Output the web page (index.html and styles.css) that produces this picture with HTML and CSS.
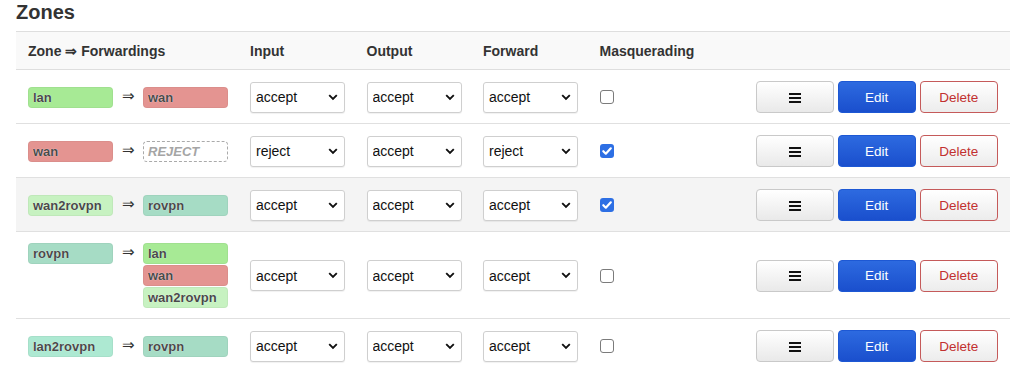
FILE: index.html
```html
<!DOCTYPE html>
<html lang="en">
<head>
    <meta charset="UTF-8">
    <title>Zones</title>
    <link rel="stylesheet" href="styles.css">
</head>
<body>

    <div class="zones">
        <h2>Zones</h2>

        <table class="zone-table">
            <colgroup>
                <col class="col-zone">
                <col class="col-pol">
                <col class="col-pol">
                <col class="col-pol">
                <col class="col-masq">
                <col>
            </colgroup>
            <thead>
                <tr>
                    <th>Zone &rArr; Forwardings</th>
                    <th>Input</th>
                    <th>Output</th>
                    <th>Forward</th>
                    <th>Masquerading</th>
                    <th></th>
                </tr>
            </thead>
            <tbody>
                <!-- lan -->
                <tr>
                    <td>
                        <div class="fwd">
                            <span class="zone z-lan">lan</span>
                            <span class="arrow">&rArr;</span>
                            <div class="dests">
                                <span class="zone z-wan">wan</span>
                            </div>
                        </div>
                    </td>
                    <td><select><option>accept</option></select></td>
                    <td><select><option>accept</option></select></td>
                    <td><select><option>accept</option></select></td>
                    <td><span class="check"></span></td>
                    <td>
                        <div class="actions">
                            <button class="btn"><svg width="12" height="10" viewBox="0 0 12 10"><path d="M0 1h12M0 5h12M0 9h12" stroke="#111" stroke-width="1.8"/></svg></button>
                            <button class="btn btn-edit">Edit</button>
                            <button class="btn btn-del">Delete</button>
                        </div>
                    </td>
                </tr>

                <!-- wan -->
                <tr>
                    <td>
                        <div class="fwd">
                            <span class="zone z-wan">wan</span>
                            <span class="arrow">&rArr;</span>
                            <div class="dests">
                                <span class="zone z-reject">REJECT</span>
                            </div>
                        </div>
                    </td>
                    <td><select><option>reject</option></select></td>
                    <td><select><option>accept</option></select></td>
                    <td><select><option>reject</option></select></td>
                    <td>
                        <span class="check checked">
                            <svg width="14" height="14" viewBox="0 0 14 14"><path d="M3.3 7.2 L5.8 9.7 L10.8 4.3" fill="none" stroke="#fff" stroke-width="2.2" stroke-linecap="round" stroke-linejoin="round"/></svg>
                        </span>
                    </td>
                    <td>
                        <div class="actions">
                            <button class="btn"><svg width="12" height="10" viewBox="0 0 12 10"><path d="M0 1h12M0 5h12M0 9h12" stroke="#111" stroke-width="1.8"/></svg></button>
                            <button class="btn btn-edit">Edit</button>
                            <button class="btn btn-del">Delete</button>
                        </div>
                    </td>
                </tr>

                <!-- wan2rovpn -->
                <tr class="shaded">
                    <td>
                        <div class="fwd">
                            <span class="zone z-wan2rovpn">wan2rovpn</span>
                            <span class="arrow">&rArr;</span>
                            <div class="dests">
                                <span class="zone z-rovpn">rovpn</span>
                            </div>
                        </div>
                    </td>
                    <td><select><option>accept</option></select></td>
                    <td><select><option>accept</option></select></td>
                    <td><select><option>accept</option></select></td>
                    <td>
                        <span class="check checked">
                            <svg width="14" height="14" viewBox="0 0 14 14"><path d="M3.3 7.2 L5.8 9.7 L10.8 4.3" fill="none" stroke="#fff" stroke-width="2.2" stroke-linecap="round" stroke-linejoin="round"/></svg>
                        </span>
                    </td>
                    <td>
                        <div class="actions">
                            <button class="btn"><svg width="12" height="10" viewBox="0 0 12 10"><path d="M0 1h12M0 5h12M0 9h12" stroke="#111" stroke-width="1.8"/></svg></button>
                            <button class="btn btn-edit">Edit</button>
                            <button class="btn btn-del">Delete</button>
                        </div>
                    </td>
                </tr>

                <!-- rovpn -->
                <tr>
                    <td>
                        <div class="fwd">
                            <span class="zone z-rovpn">rovpn</span>
                            <span class="arrow">&rArr;</span>
                            <div class="dests">
                                <span class="zone z-lan">lan</span>
                                <span class="zone z-wan">wan</span>
                                <span class="zone z-wan2rovpn">wan2rovpn</span>
                            </div>
                        </div>
                    </td>
                    <td><select><option>accept</option></select></td>
                    <td><select><option>accept</option></select></td>
                    <td><select><option>accept</option></select></td>
                    <td><span class="check"></span></td>
                    <td>
                        <div class="actions">
                            <button class="btn"><svg width="12" height="10" viewBox="0 0 12 10"><path d="M0 1h12M0 5h12M0 9h12" stroke="#111" stroke-width="1.8"/></svg></button>
                            <button class="btn btn-edit">Edit</button>
                            <button class="btn btn-del">Delete</button>
                        </div>
                    </td>
                </tr>

                <!-- lan2rovpn -->
                <tr>
                    <td>
                        <div class="fwd">
                            <span class="zone z-lan2rovpn">lan2rovpn</span>
                            <span class="arrow">&rArr;</span>
                            <div class="dests">
                                <span class="zone z-rovpn">rovpn</span>
                            </div>
                        </div>
                    </td>
                    <td><select><option>accept</option></select></td>
                    <td><select><option>accept</option></select></td>
                    <td><select><option>accept</option></select></td>
                    <td><span class="check"></span></td>
                    <td>
                        <div class="actions">
                            <button class="btn"><svg width="12" height="10" viewBox="0 0 12 10"><path d="M0 1h12M0 5h12M0 9h12" stroke="#111" stroke-width="1.8"/></svg></button>
                            <button class="btn btn-edit">Edit</button>
                            <button class="btn btn-del">Delete</button>
                        </div>
                    </td>
                </tr>
            </tbody>
        </table>
    </div>

</body>
</html>
```

FILE: styles.css
```css
body {
    margin: 0;
    padding: 0 14px 0 16px;
    font-family: "Liberation Sans", Arial, sans-serif;
    color: #333;
    background: #fff;
}

h2 {
    margin: 0;
    padding-top: 1px;
    font-size: 20px;
    line-height: 23px;
    font-weight: bold;
    color: #333;
}

/* Main table */
.zone-table {
    margin-top: 7px;
    width: 100%;
    border-collapse: collapse;
    table-layout: fixed;
}

.col-zone { width: 222px; }
.col-pol  { width: 116.5px; }
.col-masq { width: 156px; }

.zone-table thead tr {
    background: #f9f9f9;
    border-top: 1px solid #dedede;
    border-bottom: 1px solid #dedede;
}

.zone-table th {
    text-align: left;
    font-size: 14px;
    font-weight: bold;
    color: #333;
    height: 37px;
    padding: 0 12px;
}

.zone-table td {
    padding: 11px 12px 10px;
    vertical-align: middle;
    border-bottom: 1px solid #e0e0e0;
    font-size: 14px;
}

.zone-table tbody tr:last-child td {
    border-bottom: none;
}

.zone-table tr.shaded {
    background: #f4f4f4;
}

/* Zone => forwardings */
.fwd {
    display: flex;
    align-items: flex-start;
}

.dests {
    display: flex;
    flex-direction: column;
    gap: 1px;
    flex-shrink: 0;
}

.arrow {
    flex-shrink: 0;
    width: 30px;
    text-align: center;
    font-size: 15px;
    line-height: 17px;
    color: #333;
}

.zone {
    box-sizing: border-box;
    display: block;
    flex-shrink: 0;
    width: 85px;
    height: 21px;
    line-height: 20px;
    padding: 0 4px;
    border-radius: 4px;
    border: 1px solid rgba(0, 0, 0, 0.04);
    font-size: 13px;
    font-weight: bold;
    color: #4a4a4a;
    text-shadow: 0 0 1px #fff;
}

.z-lan       { background: #a7ea95; }
.z-wan       { background: #e49491; }
.z-wan2rovpn { background: #c7f2c1; }
.z-rovpn     { background: #a6dcc5; }
.z-lan2rovpn { background: #ade9d2; }

.z-reject {
    background: transparent;
    border: 1px dashed #aaa;
    color: #a5a5a5;
    font-style: italic;
}

/* Policy selects */
select {
    appearance: none;
    -webkit-appearance: none;
    box-sizing: border-box;
    width: 95px;
    height: 31px;
    padding: 0 0 0 5px;
    border: 1px solid #cfcfcf;
    border-radius: 3px;
    background: #fff url("data:image/svg+xml;utf8,<svg xmlns='http://www.w3.org/2000/svg' width='10' height='7' viewBox='0 0 10 7'><path d='M1.2 1.2 L5 5 L8.8 1.2' fill='none' stroke='%23111' stroke-width='1.9'/></svg>") no-repeat right 6px center;
    box-shadow: 0 1px 1px rgba(0, 0, 0, 0.06);
    font-family: "Liberation Sans", Arial, sans-serif;
    font-size: 14px;
    color: #111;
}

/* Masquerading checkbox */
.check {
    box-sizing: border-box;
    display: block;
    width: 14px;
    height: 14px;
    border: 1px solid #7b7b7b;
    border-radius: 3px;
    background: #fff;
}

.check.checked {
    border: none;
    background: #2d6fe4;
}

.check svg {
    display: block;
}

/* Row buttons */
.actions {
    display: flex;
    justify-content: flex-end;
    gap: 3.5px;
}

.btn {
    box-sizing: border-box;
    width: 78.5px;
    height: 32px;
    border: 1px solid #c9c9c9;
    border-radius: 4px;
    background: linear-gradient(#ffffff, #e9e9e9);
    font-family: "Liberation Sans", Arial, sans-serif;
    font-size: 13.5px;
    color: #111;
    padding: 0;
}

.btn svg {
    display: block;
    margin: 1px auto 0;
}

.btn-edit {
    border-color: #1d58d4;
    background: linear-gradient(#2d6ae0, #1a4fcd);
    color: #fff;
}

.btn-del {
    border-color: #c55a5a;
    color: #c23030;
    background: linear-gradient(#ffffff, #ececec);
}
```
